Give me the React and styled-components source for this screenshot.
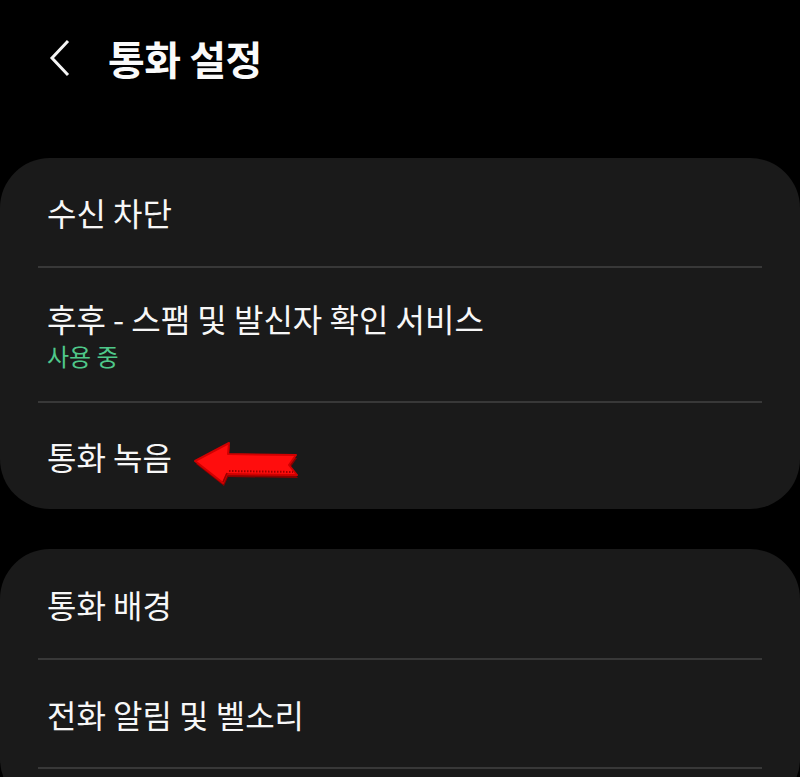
import React from 'react';
import styled, { createGlobalStyle } from 'styled-components';

const Global = createGlobalStyle`
  html, body {
    margin: 0;
    padding: 0;
    background: #000;
  }
  body {
    font-family: "Noto Sans CJK KR", "Noto Sans", sans-serif;
    color: #f7f7f7;
  }
`;

const Page = styled.div`
  width: 800px;
  height: 777px;
  overflow: hidden;
  background: #000;
`;

const Header = styled.div`
  display: flex;
  align-items: center;
  height: 116px;
  padding: 0 0 0 46px;
  box-sizing: border-box;
`;

const BackButton = styled.button`
  display: flex;
  align-items: center;
  justify-content: center;
  width: 30px;
  height: 40px;
  padding: 0;
  margin-right: 32px;
  background: none;
  border: 0;
`;

const Title = styled.h1`
  margin: 0;
  font-size: 40px;
  font-weight: 700;
  letter-spacing: -0.5px;
  color: #fafafa;
`;

const Card = styled.div`
  background: #1a1a1a;
  border-radius: 50px;
  padding: 0 38px ${p => p.$tail || 0}px;
  margin-top: ${p => p.$gap}px;
`;

const Row = styled.div`
  display: flex;
  flex-direction: column;
  justify-content: center;
  height: ${p => p.$h}px;
  border-bottom: ${p => (p.$last ? 'none' : '2px solid #383838')};
  box-sizing: border-box;
`;

const Label = styled.div`
  display: flex;
  align-items: center;
  padding-left: 9px;
  font-size: 32px;
  line-height: 38px;
  color: #f7f7f7;
`;

const Sub = styled.div`
  padding-left: 9px;
  margin-top: 4px;
  font-size: 24px;
  line-height: 30px;
  color: #4fc88a;
`;

const Pointer = styled.svg`
  margin-left: 20px;
  margin-top: 14px;
  flex: none;
`;

const Chevron = () => (
  <svg width="30" height="40" viewBox="0 0 30 40">
    <polyline points="22,3 6,20 22,37" fill="none" stroke="#f5f5f5" strokeWidth="3" strokeLinejoin="miter" />
  </svg>
);

const RedArrow = () => (
  <Pointer width="110" height="46" viewBox="0 0 108 46">
    <polygon points="2,22 36,4 35,15 103,16 96,26 104,36 34,35 30,44" fill="#8a0000" transform="translate(1,2)" />
    <polygon points="2,21 36,3 35,14 103,15 96,25 104,35 34,34 30,43" fill="#ff0d0d" stroke="#d00000" strokeWidth="2" strokeLinejoin="round" />
    <polyline points="34,33 30,42" fill="none" stroke="#900" strokeWidth="1.5" />
    <line x1="36" y1="31" x2="100" y2="32" stroke="#a00000" strokeWidth="2" strokeDasharray="1.5 1.5" />
  </Pointer>
);

const App = () => (
  <Page>
    <Global />
    <Header>
      <BackButton aria-label="뒤로">
        <Chevron />
      </BackButton>
      <Title>통화 설정</Title>
    </Header>

    <Card $gap={42}>
      <Row $h={110}>
        <Label>수신 차단</Label>
      </Row>
      <Row $h={135}>
        <Label>후후 - 스팸 및 발신자 확인 서비스</Label>
        <Sub>사용 중</Sub>
      </Row>
      <Row $h={106} $last>
        <Label>
          통화 녹음
          <RedArrow />
        </Label>
      </Row>
    </Card>

    <Card $gap={40} $tail={40}>
      <Row $h={111}>
        <Label>통화 배경</Label>
      </Row>
      <Row $h={109}>
        <Label>전화 알림 및 벨소리</Label>
      </Row>
    </Card>
  </Page>
);

export default App;
